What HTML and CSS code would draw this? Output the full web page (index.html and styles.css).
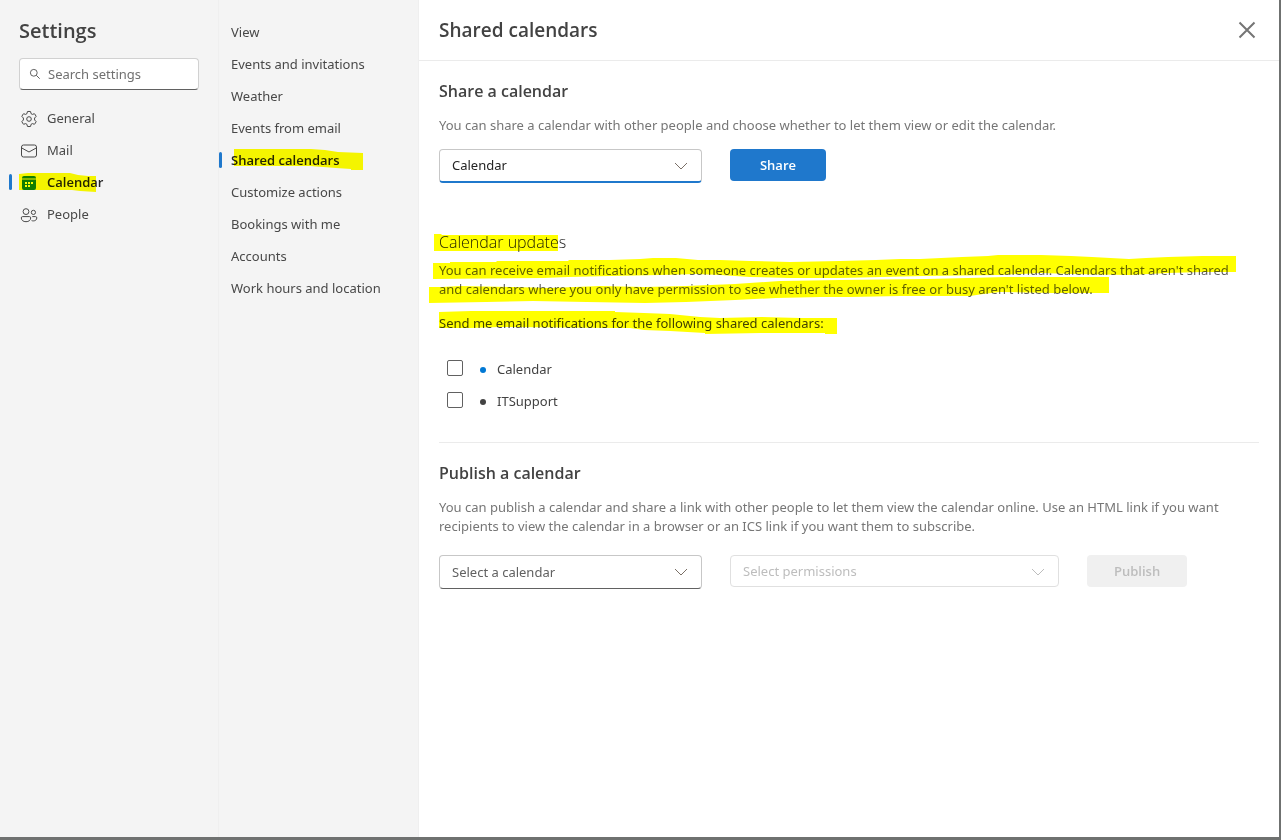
FILE: index.html
```html
<!DOCTYPE html>
<html lang="en">
<head>
    <meta charset="UTF-8">
    <meta name="viewport" content="width=device-width, initial-scale=1">
    <title>Settings - Shared calendars</title>
    <link rel="stylesheet" href="styles.css">
</head>
<body>
    <div class="settings">
        <aside class="sidebar">
            <h1>Settings</h1>
            <label class="search">
                <svg width="12" height="12" viewBox="0 0 12 12"><circle cx="4.8" cy="4.8" r="3.4"/><path d="M7.3 7.3 10.7 10.7"/></svg>
                <input type="text" placeholder="Search settings" aria-label="Search settings">
            </label>
            <nav class="menu">
                <a href="#general">
                    <svg class="icon" width="18" height="18" viewBox="0 0 18 18"><path d="M7.4 1.6Q9 1.2 10.6 1.6L11 3.6 12.4 4.4 14.4 3.7Q15.6 4.9 16.1 6.5L14.6 8V10L16.1 11.5Q15.6 13.1 14.4 14.3L12.4 13.6 11 14.4 10.6 16.4Q9 16.8 7.4 16.4L7 14.4 5.6 13.6 3.6 14.3Q2.4 13.1 1.9 11.5L3.4 10V8L1.9 6.5Q2.4 4.9 3.6 3.7L5.6 4.4 7 3.6Z"/><circle cx="9" cy="9" r="2.3"/></svg>
                    General
                </a>
                <a href="#mail">
                    <svg class="icon" width="18" height="18" viewBox="0 0 18 18"><rect x="1.5" y="3" width="15" height="12" rx="2"/><path d="M1.8 6 9 10 16.2 6"/></svg>
                    Mail
                </a>
                <a href="#calendar" class="active">
                    <svg class="icon filled" width="18" height="18" viewBox="0 0 18 18"><path d="M2 4.4V4a2 2 0 0 1 2-2h10a2 2 0 0 1 2 2v.4ZM2 5.6h14V14a2 2 0 0 1-2 2H4a2 2 0 0 1-2-2Z"/><path class="dots" d="M5 8h2v2H5zM8 8h2v2H8zM11 8h2v2h-2zM5 11h2v2H5zM8 11h2v2H8z"/></svg>
                    Calendar
                    <svg class="marker" width="104" height="32"><path d="M19 8 28 7H70L78 9 88 10H96V26L80 25 72 24H19Z"/></svg>
                </a>
                <a href="#people">
                    <svg class="icon" width="18" height="18" viewBox="0 0 18 18"><circle cx="6" cy="5.6" r="2.9"/><circle cx="13.4" cy="6.4" r="2.1"/><path d="M2.6 10.6h6.8a1.3 1.3 0 0 1 1.3 1.3c0 2.4-2 3.8-4.7 3.8s-4.7-1.4-4.7-3.8a1.3 1.3 0 0 1 1.3-1.3ZM12.3 10.6h3.2a1.3 1.3 0 0 1 1.3 1.3c0 2-1.6 3-3.5 3q-.9 0-1.7-.3"/></svg>
                    People
                </a>
            </nav>
        </aside>

        <nav class="submenu menu">
            <a href="#view">View</a>
            <a href="#events">Events and invitations</a>
            <a href="#weather">Weather</a>
            <a href="#email-events">Events from email</a>
            <a href="#shared" class="active">
                Shared calendars
                <svg class="marker" width="146" height="32"><path d="M15 5H92L106 6 119 8 144 9V26H132V25L117 24 91 22H15Z"/></svg>
            </a>
            <a href="#actions">Customize actions</a>
            <a href="#bookings">Bookings with me</a>
            <a href="#accounts">Accounts</a>
            <a href="#work-hours">Work hours and location</a>
        </nav>

        <main class="main">
            <header class="header">
                <h2>Shared calendars</h2>
                <button class="close" aria-label="Close">
                    <svg width="18" height="18" viewBox="0 0 18 18"><path d="M1.5 1.5 16.5 16.5M16.5 1.5 1.5 16.5"/></svg>
                </button>
            </header>

            <section class="section">
                <h3>Share a calendar</h3>
                <p class="hint">You can share a calendar with other people and choose whether to let them view or edit the calendar.</p>
                <div class="row">
                    <div class="select current">
                        <select aria-label="Calendar to share">
                            <option>Calendar</option>
                            <option>ITSupport</option>
                        </select>
                        <svg class="chevron" width="14" height="8" viewBox="0 0 14 8"><path d="M1 1 7 7 13 1"/></svg>
                    </div>
                    <button class="btn primary">Share</button>
                </div>
            </section>

            <section class="updates">
                <h4>Calendar updates</h4>
                <p>You can receive email notifications when someone creates or updates an event on a shared calendar. Calendars that aren't shared and calendars where you only have permission to see whether the owner is free or busy aren't listed below.</p>
                <p class="send">Send me email notifications for the following shared calendars:</p>
                <ul class="calendars">
                    <li><label><input type="checkbox"><span class="dot blue"></span>Calendar</label></li>
                    <li><label><input type="checkbox"><span class="dot"></span>ITSupport</label></li>
                </ul>
                <svg class="marker" width="820" height="110">
                    <path d="M-5 2H2L3 3H119V19H-5Z"/>
                    <path d="M-6 31H11V30H57L58 29H129L130 28 171 28 201 27 214 26H237L248 27 259 28H281L311 29 351 30 401 29 437 28 461 27 481 27 523 25 549 24 559 23H602L632 24 653 25 690 27 707 26 729 25 763 24H797V40H763L729 41 690 43 632 42 602 41 559 43 484 44 401 46H351L311 45 281 43 257 42 221 43 171 44 129 45 104 46-6 47Z"/>
                    <path d="M-10 55H3L21 54 73 55 111 56 161 54 206 55 247 54 296 52 341 49 401 48 487 47 529 46 566 45H670V61H614L561 60 544 62 531 64H461L411 65H381L337 66 296 68 247 70 206 71 148 70 94 69 47 70-10 71Z"/>
                    <path d="M0 80 32 79H176V80L205 81 231 82 251 84 261 85 281 86 322 85 361 86H398V102H386V101H322L266 102V101L231 99 205 98 191 96H176L61 95 31 96H0Z"/>
                </svg>
            </section>

            <section class="section">
                <h3>Publish a calendar</h3>
                <p class="hint">You can publish a calendar and share a link with other people to let them view the calendar online. Use an HTML link if you want recipients to view the calendar in a browser or an ICS link if you want them to subscribe.</p>
                <div class="row publish">
                    <div class="select">
                        <select aria-label="Calendar to publish">
                            <option>Select a calendar</option>
                            <option>Calendar</option>
                        </select>
                        <svg class="chevron" width="14" height="8" viewBox="0 0 14 8"><path d="M1 1 7 7 13 1"/></svg>
                    </div>
                    <div class="select wide">
                        <select aria-label="Permissions" disabled>
                            <option>Select permissions</option>
                        </select>
                        <svg class="chevron" width="14" height="8" viewBox="0 0 14 8"><path d="M1 1 7 7 13 1"/></svg>
                    </div>
                    <button class="btn" disabled>Publish</button>
                </div>
            </section>
        </main>
    </div>
</body>
</html>
```
FILE: styles.css
```css
* {
    box-sizing: border-box;
}
body {
    margin: 0;
    padding: 0 2px 3px 0;
    min-height: 100vh;
    display: flex;
    background: #6f7170;
    color: #424242;
    font-family: "Noto Sans", "Open Sans", sans-serif;
    font-size: 13px;
    line-height: 19px;
}
h1, h2, h3, h4, p, ul {
    margin: 0;
    padding: 0;
}
h1, h2, h3, h4, .btn, .menu .active {
    font-family: "Open Sans", "Noto Sans", sans-serif;
}
h1, h2 {
    font-size: 20px;
    line-height: 30px;
    font-weight: 600;
}
h2 {
    font-size: 19px;
}
h3 {
    font-size: 16px;
    line-height: 20px;
    font-weight: 600;
}
input, select, button {
    font: inherit;
    color: inherit;
}
svg {
    fill: none;
    stroke: currentColor;
    flex: none;
}
.settings {
    flex: 1;
    display: flex;
    background: #fff;
}

/* left columns */
.sidebar {
    width: 219px;
    flex: none;
    padding-top: 16px;
    background: #f4f4f4;
    border-right: 1px solid #efefef;
}
.sidebar h1 {
    padding-left: 19px;
}
.search {
    display: flex;
    align-items: center;
    gap: 7px;
    height: 32px;
    margin: 12px 19px;
    padding-left: 9px;
    background: #fff;
    border: 1px solid #d1d1d1;
    border-bottom-color: #616161;
    border-radius: 4px;
    color: #616161;
}
.search input {
    width: 100%;
    min-width: 0;
    padding: 0;
    border: none;
    outline: none;
    background: none;
}
.search input::placeholder {
    color: #707070;
    opacity: 1;
}
.menu a {
    position: relative;
    display: flex;
    align-items: center;
    gap: 9px;
    height: 32px;
    padding-left: 20px;
    color: #484848;
    text-decoration: none;
}
.menu .active {
    font-weight: 600;
    color: #242424;
}
.menu .active::before {
    content: "";
    position: absolute;
    left: 9px;
    top: 8px;
    width: 3px;
    height: 16px;
    border-radius: 2px;
    background: #1f78cc;
}
.icon {
    margin-top: 2px;
}
.icon.filled {
    fill: #117dc4;
    stroke: none;
}
.icon .dots {
    fill: #fff;
}
.submenu {
    width: 200px;
    flex: none;
    padding-top: 16px;
    background: #f4f4f4;
    border-right: 1px solid #efefef;
}
.submenu a {
    padding-left: 12px;
}
.submenu .active::before {
    left: 0;
}

/* yellow highlighter strokes */
.marker {
    position: absolute;
    left: 0;
    top: 0;
    overflow: visible;
    fill: #ff0;
    stroke: none;
    mix-blend-mode: multiply;
    pointer-events: none;
}

/* content */
.main {
    flex: 1;
    min-width: 0;
}
.header {
    display: flex;
    align-items: center;
    justify-content: space-between;
    height: 61px;
    padding: 0 20px;
    border-bottom: 1px solid #ebebeb;
}
.close {
    display: flex;
    padding: 3px;
    border: none;
    background: none;
    color: #757575;
    cursor: pointer;
}
.close svg {
    stroke-width: 2;
}
.section {
    padding: 20px 20px 0;
}
.hint {
    margin-top: 15px;
    color: #767676;
}
.row {
    display: flex;
    align-items: flex-start;
    gap: 28px;
    margin-top: 14px;
}
.row.publish {
    margin-top: 19px;
}
.select {
    position: relative;
    width: 263px;
}
.select.wide {
    width: 329px;
}
.select select {
    display: block;
    width: 100%;
    height: 34px;
    padding: 0 36px 0 12px;
    appearance: none;
    background: #fff;
    border: 1px solid #c7c7c7;
    border-bottom-color: #616161;
    border-radius: 4px;
    color: #616161;
    outline: none;
}
.select.current select {
    border-bottom: 2px solid #1f78cc;
    color: #242424;
}
.select select:disabled {
    height: 32px;
    border-color: #e0e0e0;
    color: #bdbdbd;
    opacity: 1;
}
.chevron {
    position: absolute;
    right: 14px;
    top: 13px;
    color: #7a6f66;
    pointer-events: none;
}
select:disabled + .chevron {
    color: #bdbdbd;
}
.btn {
    min-width: 96px;
    height: 32px;
    padding: 0 27px;
    border: none;
    border-radius: 4px;
    font-weight: 600;
}
.btn.primary {
    background: #1f78cc;
    color: #fff;
    cursor: pointer;
}
.btn:disabled {
    background: #f0f0f0;
    color: #bdbdbd;
}
.updates {
    position: relative;
    margin: 49px 20px 0;
    padding-bottom: 25px;
    border-bottom: 1px solid #ebebeb;
}
.updates h4 {
    font-size: 16px;
    line-height: 20px;
    font-weight: 300;
    color: #242424;
}
.updates p {
    margin-top: 9px;
    padding-right: 16px;
    color: #616161;
}
.updates .send {
    margin-top: 15px;
    color: #424242;
}
.calendars {
    margin-top: 20px;
    list-style: none;
}
.calendars label {
    display: flex;
    align-items: center;
    height: 32px;
}
.calendars input {
    appearance: none;
    width: 16px;
    height: 16px;
    margin: 0 17px 2px 8px;
    border: 1px solid #616161;
    border-radius: 2px;
    background: #fff;
}
.calendars input:checked {
    background: #1f78cc;
}
.dot {
    width: 6px;
    height: 6px;
    margin-top: 2px;
    margin-right: 11px;
    border-radius: 50%;
    background: #424242;
}
.dot.blue {
    background: #0078d4;
}
```
